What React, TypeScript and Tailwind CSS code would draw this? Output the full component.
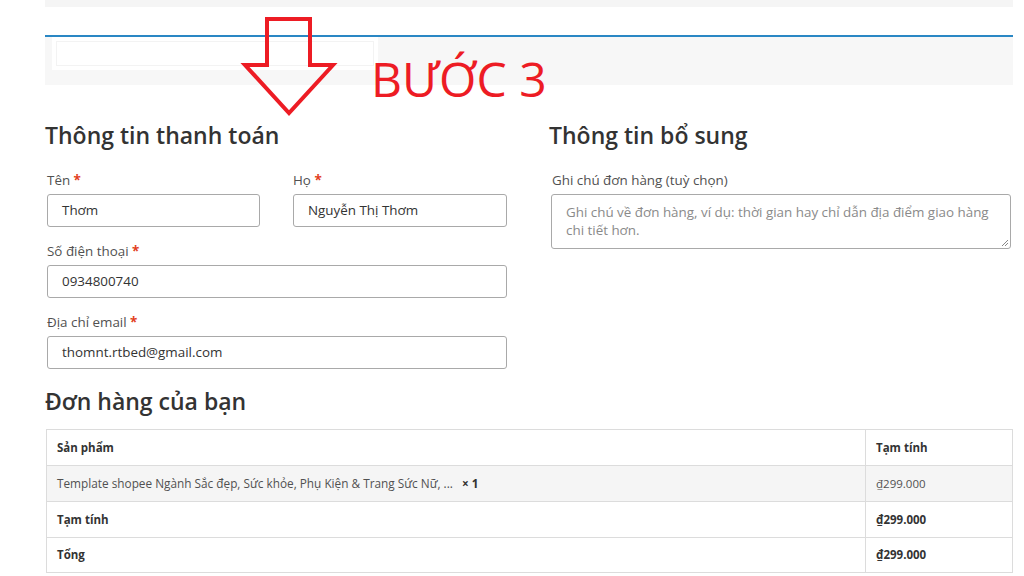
import React from 'react'

const Req = () => <span className="text-[#e2401c] font-bold">*</span>

const Field = ({ label, value, className = '' }: { label: string; value: string; className?: string }) => (
  <div className={className}>
    <div className="h-[20px] leading-[20px] text-[13.4px] text-[#515151] mb-[4px]">
      {label} <Req />
    </div>
    <div className="h-[33px] border border-[#a9a9a9] rounded-[3px] px-[14px] flex items-center text-[13.4px] text-[#333]">
      {value}
    </div>
  </div>
)

export default function App() {
  return (
    <div className="relative w-[1024px] h-[576px] bg-white overflow-hidden font-['Open_Sans',sans-serif] text-[#333]">
      <div className="ml-[45px] w-[968px]">
        <div className="h-[7px] bg-[#f5f5f5]" />
        <div className="mt-[28px] border-t-2 border-[#2a87c4] bg-[#f7f7f7] h-[50px] flex">
          <div className="w-[7px]" />
          <div className="w-[326px] h-[33px] bg-white p-[4px]">
            <div className="h-full border border-[#f3f3f3]" />
          </div>
        </div>

        <div className="flex mt-[34px]">
          <div className="w-[462px]">
            <h2 className="h-[32px] leading-[32px] text-[23px] font-semibold text-[#333] mb-[19px]">Thông tin thanh toán</h2>
            <div className="ml-[2px] w-[460px]">
              <div className="flex gap-[33px]">
                <Field label="Tên" value="Thơm" className="w-[213px]" />
                <Field label="Họ" value="Nguyễn Thị Thơm" className="w-[214px]" />
              </div>
              <Field label="Số điện thoại" value="0934800740" className="mt-[14px]" />
              <Field label="Địa chỉ email" value="thomnt.rtbed@gmail.com" className="mt-[14px]" />
            </div>
          </div>

          <div className="ml-[42px] w-[464px]">
            <h2 className="h-[32px] leading-[32px] text-[23px] font-semibold text-[#333] mb-[19px]">Thông tin bổ sung</h2>
            <div className="ml-[2px] w-[460px]">
              <div className="h-[20px] leading-[20px] text-[13.4px] text-[#515151] mb-[4px] ml-[1px]">Ghi chú đơn hàng (tuỳ chọn)</div>
              <div className="relative h-[55px] border border-[#a9a9a9] rounded-[3px] pl-[14px] pr-[10px] pt-[8px] text-[13.4px] leading-[18px] text-[#8a8a8a]">
                Ghi chú về đơn hàng, ví dụ: thời gian hay chỉ dẫn địa điểm giao hàng chi tiết hơn.
                <svg className="absolute right-[1px] bottom-[1px]" width="8" height="8" viewBox="0 0 8 8">
                  <path d="M7 1L1 7M7 4L4 7" stroke="#888" strokeWidth="1" />
                </svg>
              </div>
            </div>
          </div>
        </div>

        <h2 className="mt-[16px] h-[32px] leading-[32px] text-[23px] font-semibold text-[#333]">Đơn hàng của bạn</h2>
        <table className="mt-[12px] ml-[1px] w-[967px] border-collapse text-[11.5px] text-[#333]">
          <tbody>
            <tr className="h-[36px]">
              <td className="border border-[#dcdcdc] pl-[10px] font-bold">Sản phẩm</td>
              <td className="border border-[#dcdcdc] pl-[10px] font-bold w-[147px]">Tạm tính</td>
            </tr>
            <tr className="h-[36px] bg-[#f5f5f5]">
              <td className="border border-[#dcdcdc] pl-[10px] text-[#515151] text-[11.8px]">
                Template shopee Ngành Sắc đẹp, Sức khỏe, Phụ Kiện &amp; Trang Sức Nữ, ...&nbsp;&nbsp; <b className="text-[#333]">× 1</b>
              </td>
              <td className="border border-[#dcdcdc] pl-[10px] text-[#515151]">₫299.000</td>
            </tr>
            <tr className="h-[36px]">
              <td className="border border-[#dcdcdc] pl-[10px] font-bold">Tạm tính</td>
              <td className="border border-[#dcdcdc] pl-[10px] font-bold">₫299.000</td>
            </tr>
            <tr className="h-[35px]">
              <td className="border border-[#dcdcdc] pl-[10px] font-bold">Tổng</td>
              <td className="border border-[#dcdcdc] pl-[10px] font-bold">₫299.000</td>
            </tr>
          </tbody>
        </table>
      </div>

      {/* annotation overlay */}
      <svg className="absolute left-[238px] top-[12px]" width="100" height="106" viewBox="0 0 100 106">
        <path d="M29 7H72V53H95L51 101L7 53H29Z" fill="none" stroke="#ed1c24" strokeWidth="4" strokeLinejoin="miter" />
      </svg>
      <div className="absolute left-[371px] top-[55px] text-[48px] leading-[48px] text-[#ed1c24] font-['Open_Sans',sans-serif]">BƯỚC 3</div>
    </div>
  )
}
